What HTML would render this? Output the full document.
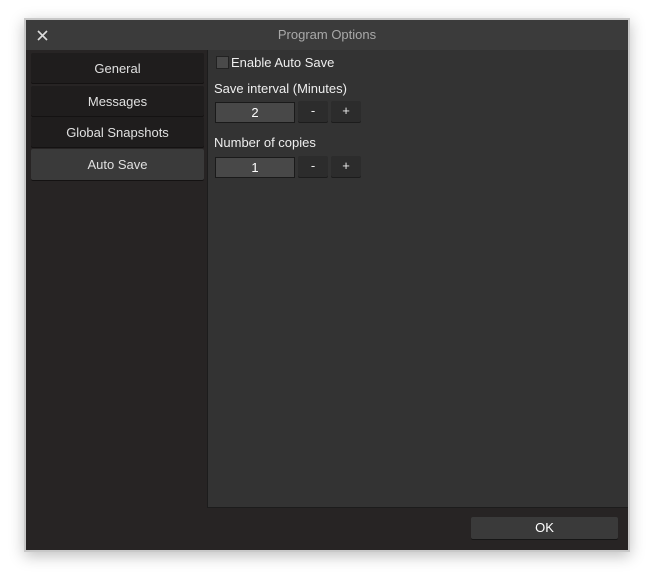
<!DOCTYPE html>
<html><head><style>
body{margin:0;width:654px;height:580px;background:#fff;font-family:"Liberation Sans",sans-serif;position:relative;overflow:hidden}
.a{position:absolute}
#win{left:24px;top:18px;width:606px;height:534px;background:#c8c8c8;box-shadow:0 4px 14px rgba(0,0,0,.25)}
#inner{left:26px;top:20px;width:602px;height:530px;background:#272424}
#title{left:26px;top:20px;width:602px;height:30px;background:#3b3b3b;color:#a9a9a9;font-size:13px;line-height:30px;text-align:center}
.side{left:31px;width:173px;height:31px;background:#1f1d1d;color:#e0e0e0;font-size:13px;line-height:31px;text-align:center;border-radius:2px;box-shadow:inset 0 -1px 0 #141212}
#content{left:207px;top:50px;width:420px;height:457px;background:#333;border-left:1px solid #1c1c1c;border-bottom:1px solid #1c1c1c}
.t{color:#eee;font-size:13px}
.inp{width:78px;height:19px;background:#484848;border:1px solid #1a1a1a;color:#fff;font-size:13px;line-height:19px;text-align:center}
.btn{width:30px;height:21px;background:#2c2c2c;color:#eee;font-size:13px;line-height:20px;text-align:center;border-radius:2px;box-shadow:0 1px 0 #1c1c1c}
</style></head><body>
<div class="a" id="win"></div>
<div class="a" id="inner"></div>
<div class="a" id="title">Program Options</div>
<svg class="a" style="left:37px;top:30px" width="11" height="11"><path d="M1 1L10 10M10 1L1 10" stroke="#ddd" stroke-width="1.6"/></svg>
<div class="a side" style="top:53px">General</div>
<div class="a side" style="top:86px">Messages</div>
<div class="a side" style="top:117px">Global Snapshots</div>
<div class="a side" style="top:149px;background:#3a3a3a;height:32px">Auto Save</div>
<div class="a" id="content"></div>
<div class="a" style="left:216px;top:56px;width:11px;height:11px;background:#4a4a4a;border:1px solid #222"></div>
<div class="a t" style="left:231px;top:55px">Enable Auto Save</div>
<div class="a t" style="left:214px;top:81px">Save interval (Minutes)</div>
<div class="a inp" style="left:215px;top:102px">2</div>
<div class="a btn" style="left:298px;top:101px">-</div>
<div class="a btn" style="left:331px;top:101px">+</div>
<div class="a t" style="left:214px;top:135px">Number of copies</div>
<div class="a inp" style="left:215px;top:157px">1</div>
<div class="a btn" style="left:298px;top:156px">-</div>
<div class="a btn" style="left:331px;top:156px">+</div>
<div class="a" style="left:471px;top:517px;width:147px;height:22px;background:#3a3a3a;border-radius:2px;color:#fff;font-size:13px;line-height:21px;text-align:center;box-shadow:0 1px 0 #161616">OK</div>
</body></html>
